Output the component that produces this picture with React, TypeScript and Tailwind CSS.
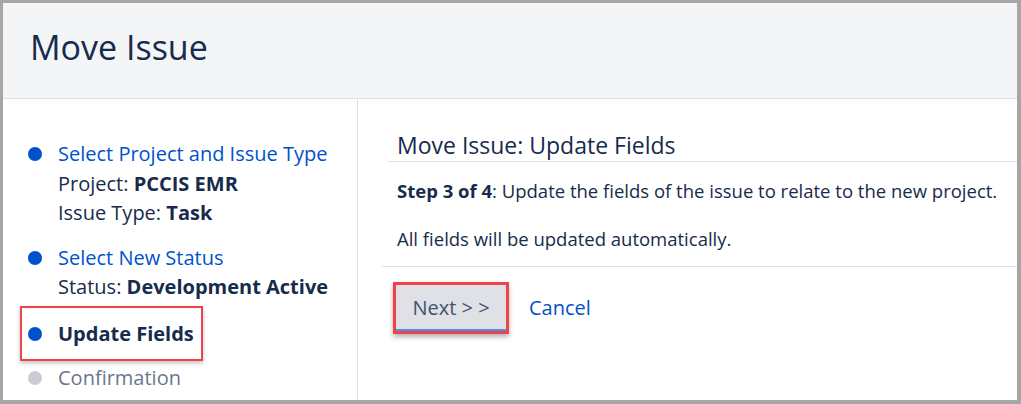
import React from 'react'

const font = { fontFamily: '"Open Sans", "Noto Sans", Arial, sans-serif' }

function Bullet({ active = true }: { active?: boolean }) {
  return (
    <span
      className={`mt-[8px] h-[14px] w-[14px] shrink-0 rounded-full ${active ? 'bg-[#0052cc]' : 'bg-[#c9cdd3]'}`}
    />
  )
}

export default function App() {
  return (
    <div
      className="w-[1021px] h-[404px] overflow-hidden bg-white border-[#a6a6a6] border-t-[3px] border-l-[3px] border-r-4 border-b-4 flex flex-col text-[#172b4d]"
      style={font}
    >
      {/* Header */}
      <header className="h-[96px] shrink-0 bg-[#f4f5f7] border-b border-[#dfe1e6] pl-[27px] flex items-center">
        <h1 className="text-[34px] leading-none font-normal text-[#172b4d] -mt-[8px]">Move Issue</h1>
      </header>

      <div className="flex flex-1 min-h-0">
        {/* Steps */}
        <aside className="w-[355px] shrink-0 border-r border-[#dfe1e6] pl-[25px] pt-[40px]">
          <ul className="flex flex-col gap-[15px] text-[20px] leading-[29.5px]">
            <li className="flex gap-[16px]">
              <Bullet />
              <div>
                <a className="text-[#0052cc]">Select Project and Issue Type</a>
                <div>Project: <b className="font-bold">PCCIS EMR</b></div>
                <div>Issue Type: <b className="font-bold">Task</b></div>
              </div>
            </li>
            <li className="flex gap-[16px]">
              <Bullet />
              <div>
                <a className="text-[#0052cc]">Select New Status</a>
                <div>Status: <b className="font-bold">Development Active</b></div>
              </div>
            </li>
            <li className="-ml-[8px] w-[183px] flex gap-[16px] pl-[6px] py-[11px] -my-[11px] border-2 border-[#ef4349] shadow-[0_2px_4px_rgba(0,0,0,0.25)] whitespace-nowrap">
              <Bullet />
              <span className="font-bold">Update Fields</span>
            </li>
            <li className="-mt-[2px] flex gap-[16px] text-[#6b778c]">
              <Bullet active={false} />
              <span>Confirmation</span>
            </li>
          </ul>
        </aside>

        {/* Content */}
        <main className="flex-1 pl-[24px] pt-[30px]">
          <h2 className="ml-[6px] pl-[9px] text-[23px] leading-[32px] font-normal border-b border-[#dfe1e6]">
            Move Issue: Update Fields
          </h2>
          <div className="pl-[15px] text-[18.5px] leading-[25px] pt-[16px]">
            <p className="whitespace-nowrap">
              <b className="font-bold">Step 3 of 4</b>: Update the fields of the issue to relate to the new project.
            </p>
            <p className="mt-[23px]">All fields will be updated automatically.</p>
          </div>
          <div className="mt-[15px] border-t border-[#dfe1e6] pt-[15px] pl-[11px] flex items-center gap-[20px]">
            <button className="w-[116px] h-[52px] border-[3px] border-[#ef4349] bg-[#dfe1e6] text-[20px] text-[#42526e] [box-shadow:inset_0_-2px_0_#4c8ff0,0_3px_5px_rgba(0,0,0,0.3)]">
              Next &gt; &gt;
            </button>
            <a className="text-[20px] text-[#0052cc]">Cancel</a>
          </div>
        </main>
      </div>
    </div>
  )
}
